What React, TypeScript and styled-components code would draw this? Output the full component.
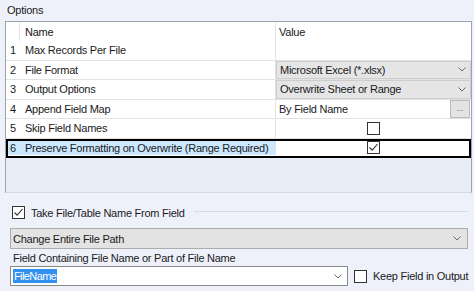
import React from 'react'
import styled, { createGlobalStyle } from 'styled-components'

const GlobalStyle = createGlobalStyle`
	html, body {
		margin: 0;
		padding: 0;
		background: #eef1fa;
	}
	body {
		font-family: 'Liberation Sans', Arial, sans-serif;
		font-size: 11px;
		letter-spacing: -0.25px;
		color: #1a1a1a;
	}
`

const Page = styled.div`
	width: 474px;
	height: 291px;
	overflow: hidden;
	display: flex;
	flex-direction: column;
`

const SectionTitle = styled.div`
	height: 21px;
	line-height: 21px;
	padding-left: 7px;
`

const Grid = styled.div`
	box-sizing: border-box;
	margin-left: 5px;
	width: 467px;
	height: 172px;
	border: 1px solid #9ea3ad;
	border-bottom-color: #d3d8e2;
	background: #e9edf8;
	display: flex;
	flex-direction: column;
`

const Row = styled.div<{ $header?: boolean; $selected?: boolean }>`
	box-sizing: border-box;
	display: grid;
	grid-template-columns: 14px 256px 195px;
	height: ${p => (p.$header ? '19px' : '19.5px')};
	background: #fff;
	border-bottom: ${p => (p.$header ? 'none' : '1px solid #e2e2e2')};
	outline: ${p => (p.$selected ? '2px solid #000' : 'none')};
	outline-offset: -2px;
	position: relative;
`

const NumCell = styled.div<{ $header?: boolean; $selected?: boolean }>`
	display: flex;
	align-items: center;
	border-right: ${p => (p.$header ? '1px solid #e4e4e4' : 'none')};
	background: ${p => (p.$selected ? '#cce8ff' : 'transparent')};
	margin-left: ${p => (p.$selected ? '2px' : '0')};
	padding-left: ${p => (p.$selected ? '2px' : '4px')};
	margin-top: ${p => (p.$selected ? '2px' : '0')};
	margin-bottom: ${p => (p.$selected ? '2px' : '0')};
`

const NameCell = styled.div<{ $selected?: boolean }>`
	padding-left: 5px;
	display: flex;
	align-items: center;
	border-right: 1px solid #e2e2e2;
	white-space: nowrap;
	overflow: hidden;
	background: ${p => (p.$selected ? '#cce8ff' : 'transparent')};
	margin-top: ${p => (p.$selected ? '2px' : '0')};
	margin-bottom: ${p => (p.$selected ? '2px' : '0')};
`

const ValueCell = styled.div<{ $center?: boolean }>`
	display: flex;
	align-items: center;
	justify-content: ${p => (p.$center ? 'center' : 'flex-start')};
	padding-left: ${p => (p.$center ? '0' : '3px')};
	white-space: nowrap;
	min-width: 0;
`

const GridCombo = styled.div`
	box-sizing: border-box;
	flex: 1;
	align-self: stretch;
	display: flex;
	align-items: center;
	justify-content: space-between;
	margin-left: -3px;
	padding: 0 4px 0 3px;
	background: #e5e5e5;
	border: 1px solid #cdcdcd;
`

const EllipsisButton = styled.div`
	box-sizing: border-box;
	margin-left: auto;
	margin-right: 1px;
	width: 20px;
	height: 18px;
	background: #e3e3e3;
	border: 1px solid #b9b9b9;
	color: #777;
	font-size: 9px;
	display: flex;
	align-items: center;
	justify-content: center;
	padding-bottom: 2px;
`

const CheckBox = styled.div`
	box-sizing: border-box;
	width: 13px;
	height: 13px;
	border: 1px solid #333;
	background: #fff;
	display: flex;
	align-items: center;
	justify-content: center;
	flex-shrink: 0;
`

const Bottom = styled.div`
	display: flex;
	flex-direction: column;
	padding: 13px 0 0 10px;
`

const GroupHeader = styled.div`
	display: flex;
	align-items: center;
	height: 13px;
	padding-left: 2px;
	padding-right: 6px;
	gap: 6px;
`

const GroupLine = styled.div`
	flex: 1;
	height: 1px;
	margin-left: 3px;
	margin-top: -2px;
	background: #d6dae3;
`

const Dropdown = styled.div`
	box-sizing: border-box;
	margin-top: 9px;
	height: 21px;
	width: 458px;
	display: flex;
	align-items: center;
	justify-content: space-between;
	padding: 0 6px 0 2px;
	background: #e3e3e3;
	border: 1px solid #acacac;
`

const FieldLabel = styled.div`
	height: 16px;
	line-height: 16px;
	padding-left: 3px;
	margin-top: 1px;
`

const InputRow = styled.div`
	display: flex;
	align-items: center;
	gap: 6px;
	white-space: nowrap;
`

const TextCombo = styled.div`
	box-sizing: border-box;
	width: 338px;
	height: 20px;
	flex-shrink: 0;
	display: flex;
	align-items: center;
	justify-content: space-between;
	padding: 0 5px 0 2px;
	background: #fff;
	border: 1px solid #8a8a8a;
`

const SelectedText = styled.span`
	background: #3390f0;
	color: #fff;
	letter-spacing: -0.6px;
	padding: 0 1px;
	line-height: 14px;
`

const Chevron = () => (
	<svg width="8" height="5" viewBox="0 0 8 5">
		<polyline points="0.5,0.5 4,4 7.5,0.5" fill="none" stroke="#6b6b6b" strokeWidth="1" />
	</svg>
)

const Check = () => (
	<svg width="11" height="11" viewBox="0 0 11 11">
		<polyline points="1.5,5.5 4.2,8.2 9.5,2" fill="none" stroke="#333" strokeWidth="1.1" />
	</svg>
)

type Opt = { n: number; name: string; kind: 'empty' | 'combo' | 'map' | 'check' | 'checked'; value?: string }

const options: Opt[] = [
	{ n: 1, name: 'Max Records Per File', kind: 'empty' },
	{ n: 2, name: 'File Format', kind: 'combo', value: 'Microsoft Excel (*.xlsx)' },
	{ n: 3, name: 'Output Options', kind: 'combo', value: 'Overwrite Sheet or Range' },
	{ n: 4, name: 'Append Field Map', kind: 'map', value: 'By Field Name' },
	{ n: 5, name: 'Skip Field Names', kind: 'check' },
	{ n: 6, name: 'Preserve Formatting on Overwrite (Range Required)', kind: 'checked' },
]

const renderValue = (o: Opt) => {
	switch (o.kind) {
		case 'combo':
			return (
				<ValueCell>
					<GridCombo>
						<span>{o.value}</span>
						<Chevron />
					</GridCombo>
				</ValueCell>
			)
		case 'map':
			return (
				<ValueCell>
					<span>{o.value}</span>
					<EllipsisButton>...</EllipsisButton>
				</ValueCell>
			)
		case 'check':
			return (
				<ValueCell $center>
					<CheckBox />
				</ValueCell>
			)
		case 'checked':
			return (
				<ValueCell $center>
					<CheckBox>
						<Check />
					</CheckBox>
				</ValueCell>
			)
		default:
			return <ValueCell />
	}
}

const App = () => {
	return (
		<Page>
			<GlobalStyle />
			<SectionTitle>Options</SectionTitle>
			<Grid>
				<Row $header>
					<NumCell $header />
					<NameCell>Name</NameCell>
					<ValueCell>Value</ValueCell>
				</Row>
				{options.map(o => {
					const sel = o.kind === 'checked'
					return (
						<Row key={o.n} $selected={sel}>
							<NumCell $selected={sel}>{o.n}</NumCell>
							<NameCell $selected={sel}>{o.name}</NameCell>
							{renderValue(o)}
						</Row>
					)
				})}
			</Grid>

			<Bottom>
				<GroupHeader>
					<CheckBox>
						<Check />
					</CheckBox>
					<span>Take File/Table Name From Field</span>
					<GroupLine />
				</GroupHeader>
				<Dropdown>
					<span>Change Entire File Path</span>
					<Chevron />
				</Dropdown>
				<FieldLabel>Field Containing File Name or Part of File Name</FieldLabel>
				<InputRow>
					<TextCombo>
						<SelectedText>FileName</SelectedText>
						<Chevron />
					</TextCombo>
					<CheckBox />
					<span>Keep Field in Output</span>
				</InputRow>
			</Bottom>
		</Page>
	)
}

export default App
